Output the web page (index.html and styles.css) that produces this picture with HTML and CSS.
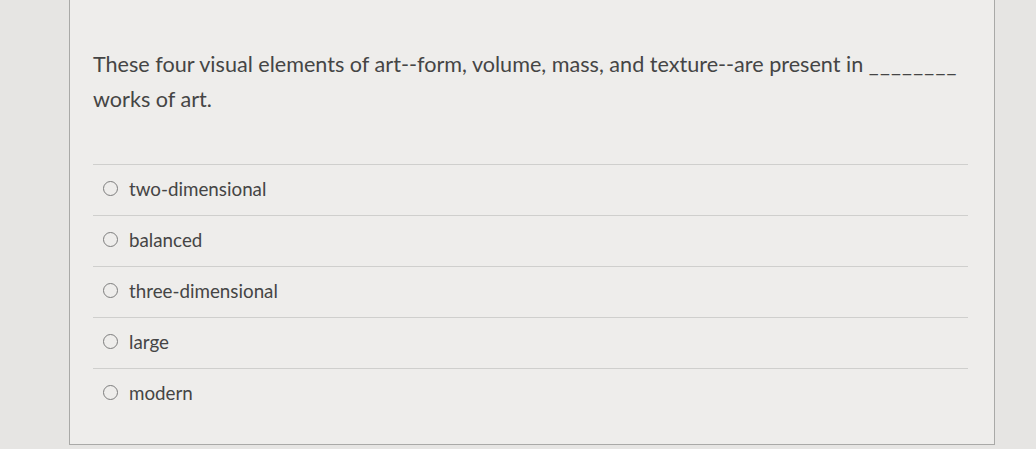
FILE: index.html
```html
<!DOCTYPE html>
<html>
<head>
<meta charset="utf-8">
<link rel="stylesheet" href="styles.css">
</head>
<body>
<div class="page">
  <div class="card">
    <div class="question">These four visual elements of art--form, volume, mass, and texture--are present in <span class="blank">________</span> works of art.</div>
    <ul class="answers">
      <li class="answer"><span class="radio"></span><span class="label">two-dimensional</span></li>
      <li class="answer"><span class="radio"></span><span class="label">balanced</span></li>
      <li class="answer"><span class="radio"></span><span class="label">three-dimensional</span></li>
      <li class="answer"><span class="radio"></span><span class="label">large</span></li>
      <li class="answer"><span class="radio"></span><span class="label">modern</span></li>
    </ul>
  </div>
</div>
</body>
</html>
```
FILE: styles.css
```css
html, body {
  margin: 0;
  padding: 0;
  background: #e6e5e3;
}
.page {
  width: 1036px;
  height: 449px;
  padding-left: 69px;
  box-sizing: border-box;
  font-family: Lato, "Liberation Sans", sans-serif;
  color: #454545;
}
.card {
  width: 926px;
  height: 445px;
  box-sizing: border-box;
  background: #eeedeb;
  border-left: 1.5px solid #a9a9a7;
  border-right: 1.5px solid #a9a9a7;
  border-bottom: 1.5px solid #a9a9a7;
  padding: 47px 26px 0 23px;
}
.question {
  font-size: 21.6px;
  line-height: 35px;
  height: 117px;
}
.blank {
  letter-spacing: 1.2px;
}
.answers {
  list-style: none;
  margin: 0;
  padding: 0;
}
.answer {
  display: flex;
  align-items: center;
  height: 51px;
  padding-bottom: 3px;
  box-sizing: border-box;
  border-top: 1px solid #cfcfcd;
  padding-left: 10px;
  font-size: 18.8px;
}
.radio {
  width: 13px;
  height: 13px;
  border: 1.7px solid #7d7d7d;
  border-radius: 50%;
  margin-right: 11px;
  flex: none;
}
```
